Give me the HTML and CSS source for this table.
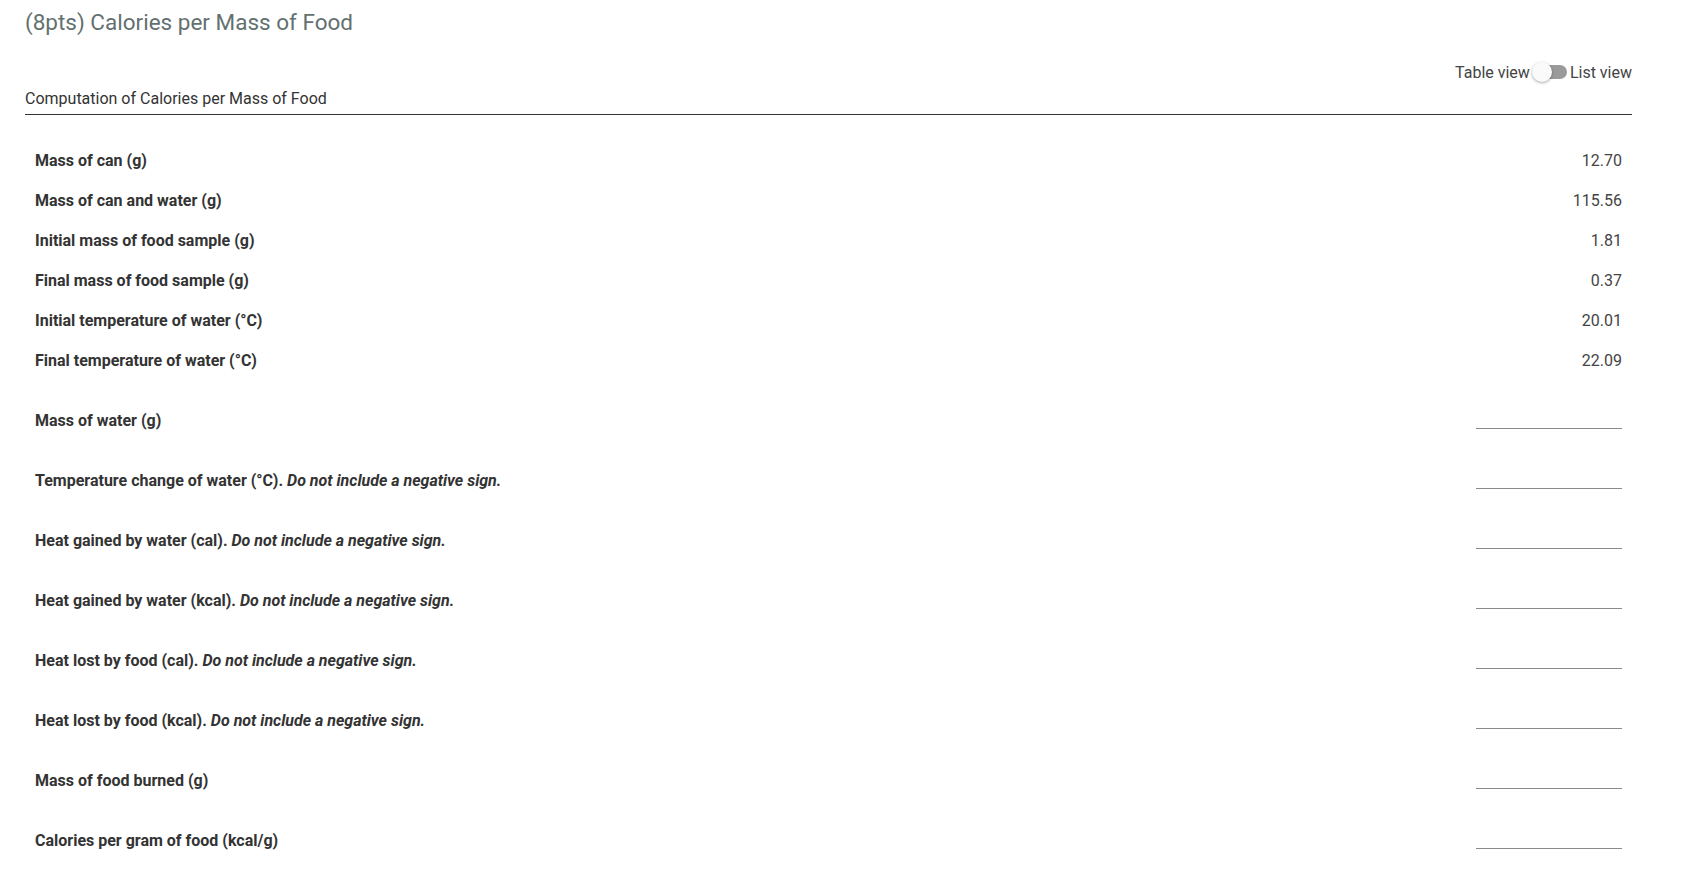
FILE: index.html
```html
<!DOCTYPE html>
<html lang="en">
<head>
  <meta charset="UTF-8" />
  <title>Calories per Mass of Food</title>
  <link rel="stylesheet" href="styles.css">
</head>
<body>

<div class="page">
  <h2 class="title">(8pts) Calories per Mass of Food</h2>

  <div class="view-toggle">
    <span>Table view</span>
    <span class="switch"><span class="knob"></span></span>
    <span>List view</span>
  </div>

  <div class="subhead">Computation of Calories per Mass of Food</div>

  <div class="data">
    <div class="row"><span class="label">Mass of can (g)</span><span class="value">12.70</span></div>
    <div class="row"><span class="label">Mass of can and water (g)</span><span class="value">115.56</span></div>
    <div class="row"><span class="label">Initial mass of food sample (g)</span><span class="value">1.81</span></div>
    <div class="row"><span class="label">Final mass of food sample (g)</span><span class="value">0.37</span></div>
    <div class="row"><span class="label">Initial temperature of water (°C)</span><span class="value">20.01</span></div>
    <div class="row"><span class="label">Final temperature of water (°C)</span><span class="value">22.09</span></div>
  </div>

  <div class="answers">
    <div class="row answer"><span class="label">Mass of water (g)</span><input type="text" class="blank" /></div>
    <div class="row answer"><span class="label">Temperature change of water (°C). <em>Do not include a negative sign.</em></span><input type="text" class="blank" /></div>
    <div class="row answer"><span class="label">Heat gained by water (cal). <em>Do not include a negative sign.</em></span><input type="text" class="blank" /></div>
    <div class="row answer"><span class="label">Heat gained by water (kcal). <em>Do not include a negative sign.</em></span><input type="text" class="blank" /></div>
    <div class="row answer"><span class="label">Heat lost by food (cal). <em>Do not include a negative sign.</em></span><input type="text" class="blank" /></div>
    <div class="row answer"><span class="label">Heat lost by food (kcal). <em>Do not include a negative sign.</em></span><input type="text" class="blank" /></div>
    <div class="row answer"><span class="label">Mass of food burned (g)</span><input type="text" class="blank" /></div>
    <div class="row answer"><span class="label">Calories per gram of food (kcal/g)</span><input type="text" class="blank" /></div>
  </div>
</div>

</body>
</html>
```

FILE: styles.css
```css
* {
  box-sizing: border-box;
}

body {
  margin: 0;
  font-family: Roboto, 'Liberation Sans', sans-serif;
  background: #fff;
  color: #333;
}

.page {
  padding: 6px 55px 0 25px;
}

.title {
  margin: 0;
  font-size: 22.5px;
  font-weight: 400;
  color: #637070;
  line-height: 32px;
}

.view-toggle {
  display: flex;
  justify-content: flex-end;
  align-items: center;
  gap: 3px;
  margin-top: 23px;
  font-size: 16px;
  color: #444;
  height: 22px;
}

.switch {
  position: relative;
  width: 34px;
  height: 14px;
  border-radius: 7px;
  background: #9a9a9a;
}

.knob {
  position: absolute;
  left: -1px;
  top: -3px;
  width: 20px;
  height: 20px;
  border-radius: 50%;
  background: #fafafa;
  box-shadow: 0 1px 3px rgba(0,0,0,0.35);
}

.subhead {
  font-size: 16px;
  color: #333;
  padding: 6px 0 6px;
  border-bottom: 1px solid #333;
}

.data {
  margin-top: 25px;
}

.row {
  display: flex;
  justify-content: space-between;
  align-items: center;
  padding: 0 10px;
  height: 40px;
  font-size: 16px;
}

.label {
  font-weight: 700;
  color: #333;
}

.label em {
  font-style: italic;
}

.value {
  color: #444;
}

.answers {
  margin-top: 10px;
}

.answer {
  height: 60px;
}

.blank {
  width: 146px;
  height: 18px;
  margin: 0;
  border: none;
  border-bottom: 1px solid #8a8a8a;
  padding: 0;
  font-size: 15px;
  background: transparent;
}
```
